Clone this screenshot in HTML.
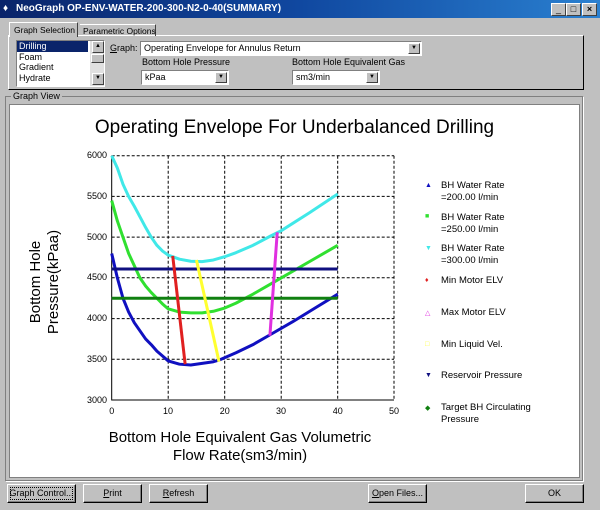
<!DOCTYPE html>
<html><head><style>
*{box-sizing:border-box}
body{margin:0;width:600px;height:510px;background:#c0c0c0;font-family:"Liberation Sans",sans-serif;font-size:9px;position:relative;overflow:hidden}
.abs{position:absolute;white-space:nowrap}
.title{left:0;top:0;width:600px;height:18px;background:linear-gradient(90deg,#0a246a,#1048a0 50%,#2a80d0);color:#fff;font-weight:bold;font-size:10px;line-height:18px;padding-left:16px}
.tb{width:15px;height:13px;top:3px;background:#c0c0c0;border:1px solid;border-color:#fff #404040 #404040 #fff;color:#000;font-size:9px;text-align:center;line-height:11px}
.raised{border:1px solid;border-color:#fff #404040 #404040 #fff}
.sunk{border:1px solid;border-color:#808080 #fff #fff #808080;background:#fff}
.combo{height:15px;font-size:9px;line-height:13px;padding-left:3px}
.arr{position:absolute;right:1px;top:1px;width:12px;height:11px;background:#c0c0c0;border:1px solid;border-color:#fff #404040 #404040 #fff;font-size:6px;text-align:center;line-height:9px}
.btn{top:484px;height:19px;background:#c0c0c0;border:1px solid;border-color:#fff #000 #000 #fff;box-shadow:inset -1px -1px #808080;text-align:center;line-height:17px;font-size:9px}
.leg{left:441px;font-size:9.5px;line-height:12px;color:#000}
.mk{left:425px;font-size:7px}
</style></head><body>
<div class="abs title">NeoGraph OP-ENV-WATER-200-300-N2-0-40(SUMMARY)</div>
<div class="abs" style="left:3px;top:3px;color:#fff;font-size:10px">♦</div>
<div class="abs tb" style="left:551px;">_</div>
<div class="abs tb" style="left:566px;">□</div>
<div class="abs tb" style="left:582px;font-weight:bold">×</div>

<div class="abs raised" style="left:8px;top:35px;width:576px;height:55px;border-right-color:#000;border-bottom-color:#000"></div>
<div class="abs raised" style="left:9px;top:22px;width:69px;height:15px;background:#c0c0c0;border-bottom:none;padding:2px 0 0 4px;font-size:8.5px">Graph Selection</div>
<div class="abs" style="left:80px;top:24px;width:76px;height:12px;border-top:1px solid #fff;border-right:1px solid #404040;padding:1px 0 0 3px;font-size:8.5px">Parametric Options</div>

<div class="abs sunk" style="left:16px;top:40px;width:89px;height:47px;font-size:9px;line-height:10.5px">
<div style="background:#0a246a;color:#fff;width:71px;padding-left:2px">Drilling</div>
<div style="padding-left:2px">Foam</div><div style="padding-left:2px">Gradient</div><div style="padding-left:2px">Hydrate</div>
<div class="abs" style="right:0;top:0;width:14px;height:45px;background:#e0e0e0"></div>
<div class="arr" style="right:0;top:0;height:12px">▲</div>
<div class="abs raised" style="right:0;top:13px;width:13px;height:9px;background:#c0c0c0"></div>
<div class="arr" style="right:0;top:32px;height:12px">▼</div>
</div>
<div class="abs" style="left:110px;top:43px"><u>G</u>raph:</div>
<div class="abs sunk combo" style="left:140px;top:41px;width:282px">Operating Envelope for Annulus Return<div class="arr">▼</div></div>
<div class="abs" style="left:142px;top:57px">Bottom Hole Pressure</div>
<div class="abs" style="left:292px;top:57px">Bottom Hole Equivalent Gas</div>
<div class="abs sunk combo" style="left:141px;top:70px;width:88px">kPaa<div class="arr">▼</div></div>
<div class="abs sunk combo" style="left:292px;top:70px;width:88px">sm3/min<div class="arr">▼</div></div>

<div class="abs" style="left:5px;top:96px;width:578px;height:385px;border:1px solid #808080;box-shadow:1px 1px #fff"></div>
<div class="abs" style="left:11px;top:91px;background:#c0c0c0;padding:0 2px">Graph View</div>
<div class="abs" style="left:9px;top:104px;width:571px;height:374px;background:#fff;border:1px solid #808080"></div>

<div class="abs" style="left:9px;top:117px;width:571px;text-align:center;font-size:19px">Operating Envelope For Underbalanced Drilling</div>
<div class="abs" style="left:-60px;top:264px;width:210px;text-align:center;font-size:15px;line-height:18px;transform:rotate(-90deg)">Bottom Hole<br>Pressure(kPaa)</div>
<div class="abs" style="left:60px;top:429px;width:360px;text-align:center;font-size:15px;line-height:18px">Bottom Hole Equivalent Gas Volumetric<br>Flow Rate(sm3/min)</div>

<svg class="abs" style="left:0;top:0" width="600" height="510">
<g font-family="Liberation Sans" font-size="9" fill="#000">
<text x="107" y="158" text-anchor="end">6000</text>
<text x="107" y="199" text-anchor="end">5500</text>
<text x="107" y="240" text-anchor="end">5000</text>
<text x="107" y="280" text-anchor="end">4500</text>
<text x="107" y="321" text-anchor="end">4000</text>
<text x="107" y="362" text-anchor="end">3500</text>
<text x="107" y="403" text-anchor="end">3000</text>
<text x="111.7" y="414" text-anchor="middle">0</text>
<text x="168" y="414" text-anchor="middle">10</text>
<text x="224.7" y="414" text-anchor="middle">20</text>
<text x="281" y="414" text-anchor="middle">30</text>
<text x="337.7" y="414" text-anchor="middle">40</text>
<text x="394" y="414" text-anchor="middle">50</text>
</g>
<g stroke="#000" stroke-width="1" stroke-dasharray="3,2" fill="none">
<path d="M111.7 155.7H394M111.7 196.4H394M111.7 237.1H394M111.7 277.8H394M111.7 318.6H394M111.7 359.3H394M168.2 155.7V400M224.7 155.7V400M281.2 155.7V400M337.7 155.7V400M394 155.7V400"/>
</g>
<path d="M111.7 155.7V400H394" stroke="#000" fill="none"/>
<g transform="translate(111.7,400) scale(5.65,-0.0814) translate(0,-3000)" fill="none" stroke-width="3" stroke-linejoin="round">
<polyline vector-effect="non-scaling-stroke" stroke="#1010c0" points="0,4800 1,4500 2,4250 3,4080 4,3950 5,3850 6,3750 7,3680 8,3600 9,3540 10,3480 12,3440 14,3430 16,3450 18,3470 19,3490 22,3580 25,3680 28,3800 32,3960 36,4130 40,4300"/>
<polyline vector-effect="non-scaling-stroke" stroke="#30e030" points="0,5450 1,5200 2,5000 3,4800 4,4650 5,4500 6,4400 7,4320 8,4250 9,4180 10,4120 12,4080 14,4070 16,4070 18,4090 20,4130 22,4190 25,4300 28,4420 30,4500 35,4700 40,4900"/>
<polyline vector-effect="non-scaling-stroke" stroke="#40e8e8" points="0,6000 1,5850 2,5650 3,5500 4,5380 5,5250 6,5120 7,5000 8,4900 9,4830 10,4780 12,4730 14,4705 16,4700 18,4720 20,4760 22,4810 25,4900 28,5010 30,5080 35,5300 40,5530"/>
<path vector-effect="non-scaling-stroke" stroke="#101080" d="M0 4610H40"/>
<path vector-effect="non-scaling-stroke" stroke="#108010" d="M0 4250H40"/>
<path vector-effect="non-scaling-stroke" stroke="#e02020" d="M10.8 4770L13 3440"/>
<path vector-effect="non-scaling-stroke" stroke="#ffff30" d="M15 4720L19 3470"/>
<path vector-effect="non-scaling-stroke" stroke="#e030e0" d="M29.3 5060L28 3790"/>
</g>
</svg>

<div class="abs mk" style="top:182px;color:#1010c0">▲</div><div class="abs leg" style="top:180px">BH Water Rate<br>=200.00 l/min</div>
<div class="abs mk" style="top:213px;color:#30e030">■</div><div class="abs leg" style="top:212px">BH Water Rate<br>=250.00 l/min</div>
<div class="abs mk" style="top:245px;color:#40e8e8">▼</div><div class="abs leg" style="top:243px">BH Water Rate<br>=300.00 l/min</div>
<div class="abs mk" style="top:277px;color:#e02020">♦</div><div class="abs leg" style="top:275px">Min Motor ELV</div>
<div class="abs mk" style="top:309px;color:#e030e0">△</div><div class="abs leg" style="top:307px">Max Motor ELV</div>
<div class="abs mk" style="top:341px;color:#ffff30">□</div><div class="abs leg" style="top:339px">Min Liquid Vel.</div>
<div class="abs mk" style="top:372px;color:#101080">▼</div><div class="abs leg" style="top:370px">Reservoir Pressure</div>
<div class="abs mk" style="top:404px;color:#108010">◆</div><div class="abs leg" style="top:402px">Target BH Circulating<br>Pressure</div>

<div class="abs btn" style="left:7px;width:69px;outline:1px dotted #000;outline-offset:-4px">Graph Control...</div>
<div class="abs btn" style="left:83px;width:59px"><u>P</u>rint</div>
<div class="abs btn" style="left:149px;width:59px"><u>R</u>efresh</div>
<div class="abs btn" style="left:368px;width:59px"><u>O</u>pen Files...</div>
<div class="abs btn" style="left:525px;width:59px">OK</div>
</body></html>
